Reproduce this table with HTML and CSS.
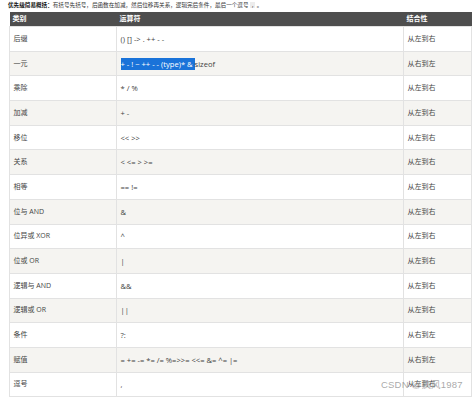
FILE: index.html
```html
<!DOCTYPE html>
<html lang="zh-CN">
<head>
<meta charset="utf-8">
<link rel="stylesheet" href="styles.css">
</head>
<body>
<div class="page">
  <p class="intro"><b>优先级简易概括：</b>有括号先括号，后函数在加减，然后位移再关系，逻辑完后条件，最后一个逗号 <code>,</code> 。</p>
  <table class="ops">
    <colgroup><col class="c1"><col class="c2"><col class="c3"></colgroup>
    <thead><tr><th>类别</th><th>运算符</th><th>结合性</th></tr></thead>
    <tbody>
      <tr><td>后缀</td><td>() [] -&gt; . ++ - -</td><td>从左到右</td></tr>
      <tr><td>一元</td><td><span class="sel">+ - ! ~ ++ - - (type)* &amp; </span>sizeof</td><td>从右到左</td></tr>
      <tr><td>乘除</td><td>* / %</td><td>从左到右</td></tr>
      <tr><td>加减</td><td>+ -</td><td>从左到右</td></tr>
      <tr><td>移位</td><td>&lt;&lt; &gt;&gt;</td><td>从左到右</td></tr>
      <tr><td>关系</td><td>&lt; &lt;= &gt; &gt;=</td><td>从左到右</td></tr>
      <tr><td>相等</td><td>== !=</td><td>从左到右</td></tr>
      <tr><td>位与 AND</td><td>&amp;</td><td>从左到右</td></tr>
      <tr><td>位异或 XOR</td><td>^</td><td>从左到右</td></tr>
      <tr><td>位或 OR</td><td>|</td><td>从左到右</td></tr>
      <tr><td>逻辑与 AND</td><td>&amp;&amp;</td><td>从左到右</td></tr>
      <tr><td>逻辑或 OR</td><td>||</td><td>从左到右</td></tr>
      <tr><td>条件</td><td>?:</td><td>从右到左</td></tr>
      <tr><td>赋值</td><td>= += -= *= /= %=&gt;&gt;= &lt;&lt;= &amp;= ^= |=</td><td>从右到左</td></tr>
      <tr><td>逗号</td><td>,</td><td>从左到右</td></tr>
    </tbody>
  </table>
  <div class="watermark">CSDN @疯风1987</div>
</div>
</body>
</html>
```
FILE: styles.css
```css
html, body {
  margin: 0;
  padding: 0;
  background: #fff;
}
.page {
  position: relative;
  padding: 0 3px 0 9px;
  font-family: "Open Sans", "Noto Sans CJK SC", sans-serif;
  color: #444;
  height: 399px;
  overflow: hidden;
}
.intro {
  margin: 0 0 0 -1px;
  height: 12px;
  font-size: 5.6px;
  line-height: 11px;
  color: #333;
}
.intro b {
  color: #111;
}
.intro code {
  background: #ececec;
  padding: 0 1px;
}
.ops {
  width: 462px;
  border-collapse: collapse;
  table-layout: fixed;
  font-size: 7px;
}
.c1 { width: 107px; }
.c2 { width: 287px; }
.c3 { width: 68px; }
.ops th {
  background: #4e4e4e;
  color: #fff;
  font-weight: bold;
  text-align: left;
  height: 14px;
  padding: 0 0 0 3px;
  line-height: 14px;
  border: 0;
}
.ops td {
  height: 23.7px;
  padding: 0 0 0 3.5px;
  border: 1px solid #e2e2e2;
  line-height: 10px;
  vertical-align: middle;
}
.ops td:nth-child(2) {
  font-size: 7.6px;
}
.ops tbody tr:nth-child(even) td {
  background: #f5f4f1;
}
.sel {
  background: #1a73d9;
  color: #fff;
  padding: 1px 0;
}
.watermark {
  position: absolute;
  left: 381px;
  top: 377px;
  font-size: 9.5px;
  font-family: "Liberation Sans", "Noto Sans CJK SC", sans-serif;
  color: rgba(140, 140, 140, 0.75);
  letter-spacing: 0.2px;
}
```
